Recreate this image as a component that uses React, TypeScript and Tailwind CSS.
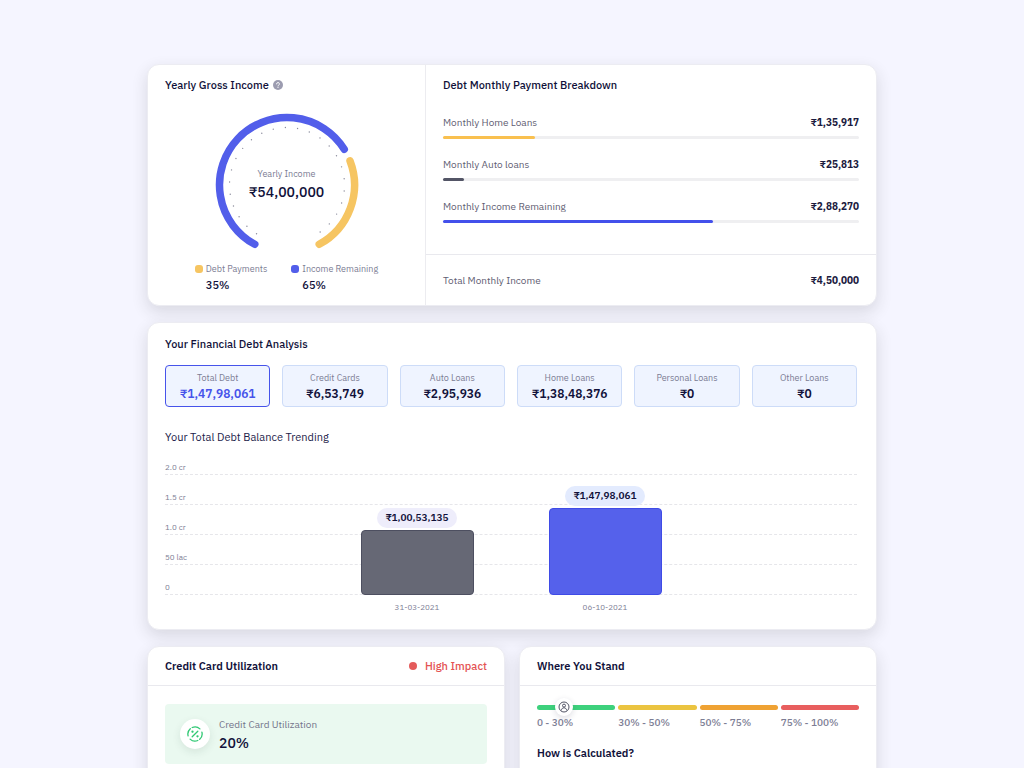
import React, { useState } from 'react';

interface PaymentRow {
  label: string;
  amount: string;
  percent: number;
  color: string;
}

interface DebtTile {
  label: string;
  amount: string;
}

interface BalanceBar {
  date: string;
  amount: string;
  height: number;
  bar: string;
  pill: string;
}

const PAYMENTS: PaymentRow[] = [
  { label: 'Monthly Home Loans', amount: '₹1,35,917', percent: 22, color: 'bg-[#f9c04f]' },
  { label: 'Monthly Auto loans', amount: '₹25,813', percent: 5, color: 'bg-[#535566]' },
  { label: 'Monthly Income Remaining', amount: '₹2,88,270', percent: 65, color: 'bg-[#4350eb]' }
];

const TILES: DebtTile[] = [
  { label: 'Total Debt', amount: '₹1,47,98,061' },
  { label: 'Credit Cards', amount: '₹6,53,749' },
  { label: 'Auto Loans', amount: '₹2,95,936' },
  { label: 'Home Loans', amount: '₹1,38,48,376' },
  { label: 'Personal Loans', amount: '₹0' },
  { label: 'Other Loans', amount: '₹0' }
];

const GRID_LABELS = ['2.0 cr', '1.5 cr', '1.0 cr', '50 lac', '0'];

const BALANCES: BalanceBar[] = [
  { date: '31-03-2021', amount: '₹1,00,53,135', height: 65, bar: 'bg-[#666875] border-[#4d4f60]', pill: 'bg-[#eeedfb]' },
  { date: '06-10-2021', amount: '₹1,47,98,061', height: 87, bar: 'bg-[#5561eb] border-[#3f4be6]', pill: 'bg-[#e3ebfe]' }
];

const RANGES = [
  { label: '0 - 30%', color: 'bg-[#3dd17c]' },
  { label: '30% - 50%', color: 'bg-[#ebc440]' },
  { label: '50% - 75%', color: 'bg-[#efa233]' },
  { label: '75% - 100%', color: 'bg-[#e85e5e]' }
];

const CARD = 'bg-white rounded-xl border border-[#ececf2] shadow-[0_6px_16px_rgba(40,40,45,0.14)]';
const TITLE = 'text-[11px] leading-4 font-medium text-[#11113a]';
const TITLE_BOLD = 'text-[11px] leading-4 font-semibold text-[#11113a]';

// point on the gauge, angle in degrees clockwise from the top
function polar(radius: number, angle: number) {
  const rad = (angle * Math.PI) / 180;
  return { x: 72 + radius * Math.sin(rad), y: 72 - radius * Math.cos(rad) };
}

function arc(radius: number, from: number, to: number) {
  const a = polar(radius, from);
  const b = polar(radius, to);
  return `M${a.x} ${a.y}A${radius} ${radius} 0 ${to - from > 180 ? 1 : 0} 1 ${b.x} ${b.y}`;
}

function Gauge() {
  const ticks = Array.from({ length: 25 }, (_, i) => polar(57.5, -148 + i * 12.2));

  return (
    <div className="grid w-36 place-items-center">
      <svg viewBox="0 0 144 144" className="col-start-1 row-start-1 h-36 w-36" fill="none" aria-hidden="true">
        <path d={arc(67.5, -151.5, 58)} stroke="#525eea" strokeWidth="7.5" strokeLinecap="round" />
        <path d={arc(67.5, 69, 151.5)} stroke="#f6c562" strokeWidth="7.5" strokeLinecap="round" />
        {ticks.map((t, i) => (
          <circle key={i} cx={t.x} cy={t.y} r="0.7" fill="#8a8b9c" />
        ))}
      </svg>
      <div className="col-start-1 row-start-1 pb-[2px] text-center">
        <div className="text-[9px] leading-4 text-[#7c7d94]">Yearly Income</div>
        <div className="text-sm leading-5 font-medium text-[#11113a]">₹54,00,000</div>
      </div>
    </div>
  );
}

function Legend({ color, label, value }: { color: string; label: string; value: string }) {
  return (
    <div className="flex gap-[3px]">
      <span className={`mt-1 h-2 w-2 rounded-[3px] ${color}`} />
      <div>
        <div className="text-[9px] leading-4 text-[#7c7d94]">{label}</div>
        <div className={TITLE}>{value}</div>
      </div>
    </div>
  );
}

function IncomeCard() {
  return (
    <section className={`${CARD} flex overflow-hidden`}>
      <div className="w-[278px] shrink-0 border-r border-[#ececf0] px-[17px] py-3">
        <div className="flex items-center gap-1">
          <h2 className={TITLE}>Yearly Gross Income</h2>
          <button type="button" aria-label="About yearly gross income">
            <svg viewBox="0 0 10 10" className="h-[10px] w-[10px]" fill="none">
              <circle cx="5" cy="5" r="5" fill="#9c9cb0" />
              <path d="M3.6 3.9a1.4 1.4 0 1 1 2 1.3c-.4.2-.6.4-.6.8" stroke="#fff" strokeLinecap="round" />
              <circle cx="5" cy="7.5" r=".6" fill="#fff" />
            </svg>
          </button>
        </div>
        <div className="mt-5 flex justify-center">
          <Gauge />
        </div>
        <div className="mt-1 flex justify-center gap-6">
          <Legend color="bg-[#f6c562]" label="Debt Payments" value="35%" />
          <Legend color="bg-[#525eea]" label="Income Remaining" value="65%" />
        </div>
      </div>
      <div className="flex min-w-0 flex-1 flex-col">
        <div className="flex-1 px-[17px] pt-3">
          <h2 className={TITLE}>Debt Monthly Payment Breakdown</h2>
          <div className="mt-[22px] space-y-[18px]">
            {PAYMENTS.map(row => (
              <div key={row.label}>
                <div className="flex justify-between text-[10px] leading-4">
                  <span className="text-[#5f6073]">{row.label}</span>
                  <span className="font-bold text-[#1b1b40]">{row.amount}</span>
                </div>
                <div className="mt-[5px] h-[3px] rounded-full bg-[#efeff1]">
                  <div className={`h-full rounded-full ${row.color}`} style={{ width: `${row.percent}%` }} />
                </div>
              </div>
            ))}
          </div>
        </div>
        <div className="flex h-[51px] items-center justify-between border-t border-[#e9e9ee] px-[17px] text-[10px]">
          <span className="text-[#5f6073]">Total Monthly Income</span>
          <span className="font-bold text-[#1b1b40]">₹4,50,000</span>
        </div>
      </div>
    </section>
  );
}

function AnalysisCard() {
  const [selected, setSelected] = useState('Total Debt');

  return (
    <section className={`${CARD} px-[17px] pt-[13px] pb-[14px]`}>
      <h2 className={TITLE}>Your Financial Debt Analysis</h2>
      <div className="mt-[13px] grid grid-cols-6 gap-3 pr-[2px]">
        {TILES.map(tile => (
          <button
            key={tile.label}
            type="button"
            onClick={() => setSelected(tile.label)}
            className={`flex h-[42px] flex-col items-center justify-center rounded-[4px] border bg-[#eff4ff] ${
              tile.label === selected ? 'border-[#4653ea] text-[#4653ea]' : 'border-[#cddcf8] text-[#11113a]'
            }`}
          >
            <span className="text-[9px] leading-4 text-[#7c7d94]">{tile.label}</span>
            <span className="text-xs leading-4 font-semibold">{tile.amount}</span>
          </button>
        ))}
      </div>
      <h3 className="mt-[22px] text-[11px] leading-4 text-[#22224a]">Your Total Debt Balance Trending</h3>
      <div className="grid pr-[2px]">
        <div className="col-start-1 row-start-1">
          {GRID_LABELS.map(label => (
            <div key={label} className="flex h-[30px] items-end border-b border-dashed border-[#e6e6ea]">
              <span className="pb-px text-[8px] leading-3 text-[#7c7d94]">{label}</span>
            </div>
          ))}
        </div>
        <div className="col-start-1 row-start-1 flex items-end justify-center gap-[75px]">
          {BALANCES.map(item => (
            <div key={item.date} className="flex w-[113px] flex-col items-center gap-[2px]">
              <span className={`rounded-full px-2 text-[10px] leading-5 font-semibold text-[#11113a] ${item.pill}`}>
                {item.amount}
              </span>
              <div className={`w-full rounded-[4px] border ${item.bar}`} style={{ height: item.height }} />
            </div>
          ))}
        </div>
      </div>
      <div className="mt-1 flex justify-center gap-[75px] pr-[2px]">
        {BALANCES.map(item => (
          <span key={item.date} className="w-[113px] text-center text-[8px] leading-4 text-[#7c7d94]">
            {item.date}
          </span>
        ))}
      </div>
    </section>
  );
}

function UtilizationCard() {
  return (
    <section className={`${CARD} pb-16`}>
      <div className="flex h-[39px] items-center justify-between border-b border-[#e9e9ee] px-[17px]">
        <h2 className={TITLE_BOLD}>Credit Card Utilization</h2>
        <div className="flex items-center gap-2 text-[11px] font-medium text-[#e45353]">
          <span className="h-2 w-2 rounded-full bg-[#e45b5b]" />
          High Impact
        </div>
      </div>
      <div className="mx-[17px] mt-[18px] flex h-[60px] items-center gap-[9px] rounded-[4px] bg-[#eaf9f0] px-[15px]">
        <div className="grid h-[30px] w-[30px] place-items-center rounded-full bg-white shadow-[0_3px_8px_rgba(30,60,50,0.1)]">
          <svg viewBox="0 0 16 16" className="h-4 w-4" fill="none" stroke="#2fc873" strokeWidth="1.3" strokeLinecap="round" strokeLinejoin="round">
            <path d="M1.1 9.8a7.1 7.1 0 0 1 2.2-7.1M5.2 1.5a7.1 7.1 0 0 1 7.7 1.4M14.9 6.2a7.1 7.1 0 0 1-2.2 7.1M10.8 14.5a7.1 7.1 0 0 1-7.7-1.4" />
            <path d="m10.8 5.2-5.6 5.6" />
            <circle cx="5.5" cy="5.7" r=".5" fill="#2fc873" />
            <circle cx="10.5" cy="10.3" r=".5" fill="#2fc873" />
          </svg>
        </div>
        <div className="pt-[2px]">
          <div className="text-[10px] leading-4 text-[#74758b]">Credit Card Utilization</div>
          <div className="text-sm leading-5 font-medium text-[#11113a]">20%</div>
        </div>
      </div>
    </section>
  );
}

function StandCard() {
  return (
    <section className={`${CARD} pb-16`}>
      <div className="flex h-[39px] items-center border-b border-[#e9e9ee] px-[17px]">
        <h2 className={TITLE_BOLD}>Where You Stand</h2>
      </div>
      <div className="px-[17px] pt-[19px]">
        <div className="relative grid grid-cols-4 gap-[3px]">
          {RANGES.map(range => (
            <div key={range.label}>
              <div className={`h-[5px] rounded-full ${range.color}`} />
              <div className="mt-[5px] text-[10px] leading-4 font-medium text-[#7c7d94]">{range.label}</div>
            </div>
          ))}
          <div className="absolute -top-[7px] left-[18px] grid h-[18px] w-[18px] place-items-center rounded-full bg-white shadow-[0_2px_6px_rgba(30,30,60,0.15)]">
            <svg viewBox="0 0 12 12" className="h-3 w-3" fill="none" stroke="#535566">
              <circle cx="6" cy="6" r="5" />
              <circle cx="6" cy="4.6" r="1.5" />
              <path d="M3.3 9.4C3.6 7.6 4.6 6.8 6 6.8s2.4.8 2.7 2.6" />
            </svg>
          </div>
        </div>
        <h3 className={`mt-[14px] ${TITLE_BOLD}`}>How is Calculated?</h3>
      </div>
    </section>
  );
}

export default function App(): React.ReactElement {
  return (
    <div className="h-screen overflow-hidden bg-[#f5f5ff] font-['IBM_Plex_Sans','Roboto',sans-serif]">
      <main className="mx-auto max-w-[730px] space-y-4 pt-16">
        <IncomeCard />
        <AnalysisCard />
        <div className="grid grid-cols-2 items-start gap-[14px]">
          <UtilizationCard />
          <StandCard />
        </div>
      </main>
    </div>
  );
}
